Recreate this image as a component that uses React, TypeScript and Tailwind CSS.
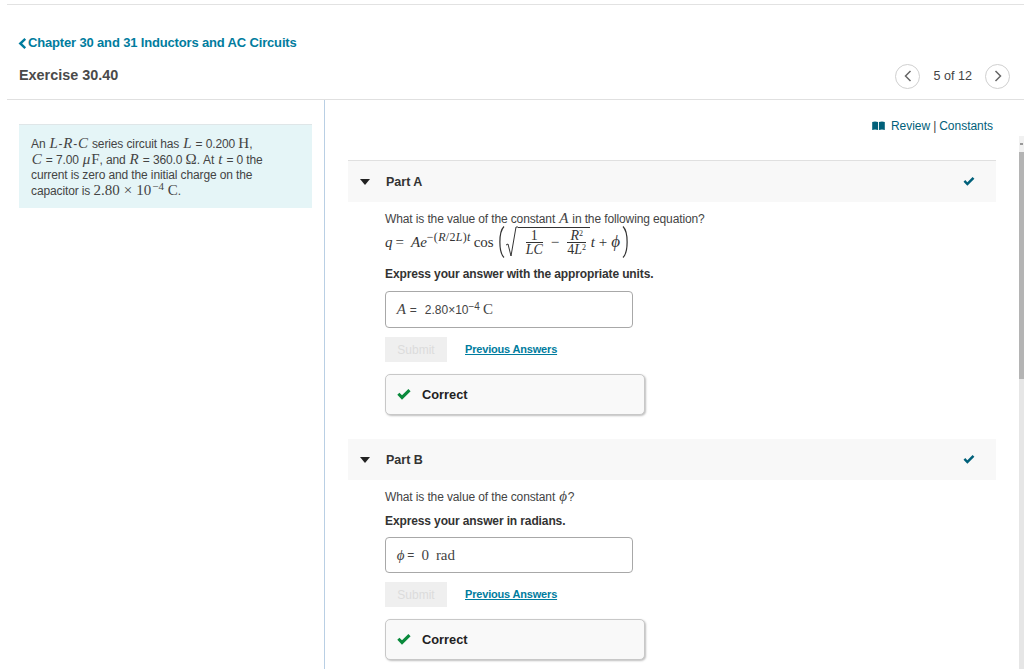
import React from 'react';

const TEAL = 'text-[#007c9e]';
const MATH = "font-['Liberation_Serif',serif]";

const V = ({ children }: { children: React.ReactNode }) => (
  <span className={`${MATH} italic text-[15px] leading-none px-[0.8px] tracking-normal`}>{children}</span>
);
const R = ({ children }: { children: React.ReactNode }) => (
  <span className={`${MATH} text-[15px] leading-none tracking-normal`}>{children}</span>
);

const Check = ({ className }: { className: string }) => (
  <svg viewBox="0 0 14 11" className={className} fill="currentColor">
    <path d="M0.3 5.8 L2.4 3.7 L5 6.3 L11.4 0 L13.6 2.2 L5 10.8 Z" />
  </svg>
);

const PartHeader = ({ label }: { label: string }) => (
  <div className="h-[41px] bg-[#f8f8f8] flex items-center pl-[12px] pr-[21px]">
    <svg viewBox="0 0 10 6" className="w-[10px] h-[6px] text-[#222]" fill="currentColor">
      <path d="M0 0 H10 L5 6 Z" />
    </svg>
    <div className="ml-[16px] mt-[1px] text-[12.5px] font-bold text-[#333]">{label}</div>
    <Check className="ml-auto w-[12px] h-[9px] text-[#00607a]" />
  </div>
);

const SubmitRow = () => (
  <div className="flex items-center mt-[9px]">
    <div className="w-[62px] h-[25px] bg-[#efefef] text-[#dcdcdc] text-[12px] flex items-center justify-center">
      Submit
    </div>
    <div className="ml-[18px] text-[11px] tracking-[-0.18px] font-bold text-[#007c9e] underline">Previous Answers</div>
  </div>
);

const Correct = () => (
  <div className="mt-[12px] w-[260px] h-[41px] bg-[#f9f9f9] border border-[#c8c8c8] rounded-[5px] shadow-[1px_1px_2px_rgba(0,0,0,0.25)] flex items-center pl-[11px]">
    <Check className="w-[14px] h-[11px] text-[#0a8a3c]" />
    <div className="ml-[11px] text-[12.8px] font-bold text-[#222]">Correct</div>
  </div>
);

const Frac = ({ top, bottom }: { top: React.ReactNode; bottom: React.ReactNode }) => (
  <span className="inline-flex flex-col items-center leading-[13px]">
    <span className="w-full text-center text-[14px] border-b border-[#333]">{top}</span>
    <span className="text-[14px]">{bottom}</span>
  </span>
);

// stretchy bracket, drawn like the math renderer does
const Paren = ({ flip }: { flip?: boolean }) => (
  <svg viewBox="0 0 8 32" className={`w-[8px] h-[32px] shrink-0 ${flip ? '-scale-x-100' : ''}`} fill="none" stroke="#333" strokeWidth="1.2">
    <path d="M7 0.5 C1.5 6 1.5 26 7 31.5" />
  </svg>
);

const Equation = () => (
  <div className={`${MATH} flex items-center h-[34px] text-[15px] text-[#333]`}>
    <i>q</i>
    <span className="ml-[3px] mr-[7px]">=</span>
    <i>Ae</i>
    <sup className="text-[12px] -top-[5px] relative leading-none tracking-[0.3px]">
      −(<i>R</i>/2<i>L</i>)<i>t</i>
    </sup>
    <span className="ml-[3px]">cos</span>
    <span className="ml-[3px]">
      <Paren />
    </span>
    {/* radical sign */}
    <svg viewBox="0 0 12 32" className="ml-[1px] w-[12px] h-[32px] shrink-0" fill="none" stroke="#333">
      <path d="M0 19 L2 18 L5 30 L10 1 H12" />
    </svg>
    <span className="flex items-center border-t border-[#333] h-[30px] pl-[8px] -mt-[1px] w-[72px]">
      <Frac top="1" bottom={<i>LC</i>} />
      <span className="mx-[8px]">−</span>
      <Frac
        top={
          <>
            <i>R</i>
            <sup className="text-[8px]">2</sup>
          </>
        }
        bottom={
          <>
            4<i>L</i>
            <sup className="text-[8px]">2</sup>
          </>
        }
      />
    </span>
    <i className="ml-[1px]">t</i>
    <span className="mx-[4px]">+</span>
    <i className="text-[17px]">ϕ</i>
    <span className="ml-[2px]">
      <Paren flip />
    </span>
  </div>
);

export default function App() {
  return (
    <div className="w-[1024px] h-[669px] overflow-hidden bg-white font-['Liberation_Sans',sans-serif] flex flex-col">
      <div className="ml-[7px] mt-[4px] h-[1px] bg-[#e2e2e2] shrink-0" />

      {/* Header */}
      <div className="ml-[7px] h-[95px] shrink-0 border-b border-[#e0e0e0] pl-[12px] pr-[14px]">
        <div className={`mt-[30px] flex items-center text-[13px] tracking-[-0.16px] font-bold ${TEAL} h-[16px]`}>
          <svg viewBox="0 0 8 10" className="w-[9px] h-[11px] -ml-[1px] mr-[1px]" fill="none" stroke="currentColor" strokeWidth="2.2">
            <path d="M6.5 0.8 L2 5 L6.5 9.2" />
          </svg>
          Chapter 30 and 31 Inductors and AC Circuits
        </div>
        <div className="flex items-center mt-[13px] h-[24px]">
          <div className="text-[14.4px] font-bold text-[#4a4a4a]">Exercise 30.40</div>
          <div className="ml-auto flex items-center">
            <div className="w-[25px] h-[25px] rounded-full border border-[#d0d0d0] flex items-center justify-center">
              <svg viewBox="0 0 8 12" className="w-[8px] h-[12px]" fill="none" stroke="#666" strokeWidth="1.5">
                <path d="M6.5 1 L1.5 6 L6.5 11" />
              </svg>
            </div>
            <div className="mx-[13px] text-[12.6px] text-[#444]">5 of 12</div>
            <div className="w-[25px] h-[25px] rounded-full border border-[#d0d0d0] flex items-center justify-center">
              <svg viewBox="0 0 8 12" className="w-[8px] h-[12px]" fill="none" stroke="#666" strokeWidth="1.5">
                <path d="M1.5 1 L6.5 6 L1.5 11" />
              </svg>
            </div>
          </div>
        </div>
      </div>

      <div className="flex flex-1 min-h-0">
        {/* Left panel */}
        <div className="w-[325px] shrink-0 border-r border-[#b9cfe4] pl-[19px] pr-[12px] pt-[24px]">
          <div className="h-[84px] bg-[#e5f5f7] border-t border-[#dfe6e8] pl-[12px] pr-[8px] pt-[11px] text-[12px] tracking-[-0.12px] leading-[15px] text-[#444]">
            An <V>L</V>-<V>R</V>-<V>C</V> series circuit has <V>L</V> = 0.200 <R>H</R>,
            <br />
            <V>C</V> = 7.00 <V>μ</V><R>F</R>, and <V>R</V> = 360.0 <R>Ω</R>. At <V>t</V> = 0 the
            <br />
            current is zero and the initial charge on the
            <br />
            capacitor is{' '}
            <R>
              2.80<span className="mx-[4px]">×</span>10
              <sup className="text-[11px] -top-[5px] leading-none ml-[1px]">−4</sup> C
            </R>
            .
          </div>
        </div>

        {/* Right panel */}
        <div className="flex-1 min-w-0 flex">
          <div className="flex-1 min-w-0 pl-[23px] pr-[23px]">
            <div className="h-[60px] flex items-start justify-end pt-[17px] pr-[3px] text-[12px] tracking-[-0.03px] text-[#00607a]">
              <svg viewBox="0 0 14 10" className="w-[13px] h-[9px] mr-[6px] mt-[4px]" fill="currentColor">
                <path d="M0 1 Q3 0 6.5 1 V10 Q3 9 0 10 Z M7.5 1 Q11 0 14 1 V10 Q11 9 7.5 10 Z" />
              </svg>
              <span>Review</span>
              <span className="text-[#444] mx-[3px]">|</span>
              <span>Constants</span>
            </div>

            <div className="border-t border-[#e0e0e0]">
              <PartHeader label="Part A" />
            </div>
            <div className="pl-[37px]">
              <div className="mt-[8px] text-[12px] tracking-[-0.12px] text-[#444] h-[15px]">
                What is the value of the constant <V>A</V> in the following equation?
              </div>
              <Equation />
              <div className="mt-[6px] text-[12px] tracking-[-0.12px] font-bold text-[#333] h-[15px]">
                Express your answer with the appropriate units.
              </div>
              <div className="mt-[11px] w-[248px] h-[37px] border border-[#a8a8a8] rounded-[4px] flex items-center pl-[10px] text-[12px] text-[#444]">
                <V>A</V>
                <span className="ml-[3px]">=</span>
                <span className="ml-[8px]">2.80×10</span>
                <sup className="text-[10px] -top-[3px] leading-none">−4</sup>
                <R>
                  <span className="ml-[3px]">C</span>
                </R>
              </div>
              <SubmitRow />
              <Correct />
            </div>

            <div className="mt-[24px]">
              <PartHeader label="Part B" />
            </div>
            <div className="pl-[37px]">
              <div className="mt-[8px] text-[12px] tracking-[-0.12px] text-[#444] h-[15px]">
                What is the value of the constant <V>ϕ</V>?
              </div>
              <div className="mt-[9px] text-[12px] tracking-[-0.12px] font-bold text-[#333] h-[15px]">Express your answer in radians.</div>
              <div className="mt-[10px] w-[248px] h-[36px] border border-[#a8a8a8] rounded-[4px] flex items-center pl-[10px] text-[#444]">
                <V>ϕ</V>
                <span className="ml-[2px] text-[12px]">=</span>
                <R>
                  <span className="ml-[7px]">0</span>
                  <span className="ml-[7px]">rad</span>
                </R>
              </div>
              <SubmitRow />
              <Correct />
            </div>
          </div>

          {/* Scrollbar */}
          <div className="w-[5px] shrink-0 mt-[36px] bg-[#e6e6e6] flex flex-col">
            <div className="h-[16px] bg-[#f1f1f1] flex items-center justify-center">
              <div className="w-[3px] h-[2px] bg-[#999]" />
            </div>
            <div className="h-[227px] bg-[#b4b4b4]" />
          </div>
        </div>
      </div>
    </div>
  );
}
